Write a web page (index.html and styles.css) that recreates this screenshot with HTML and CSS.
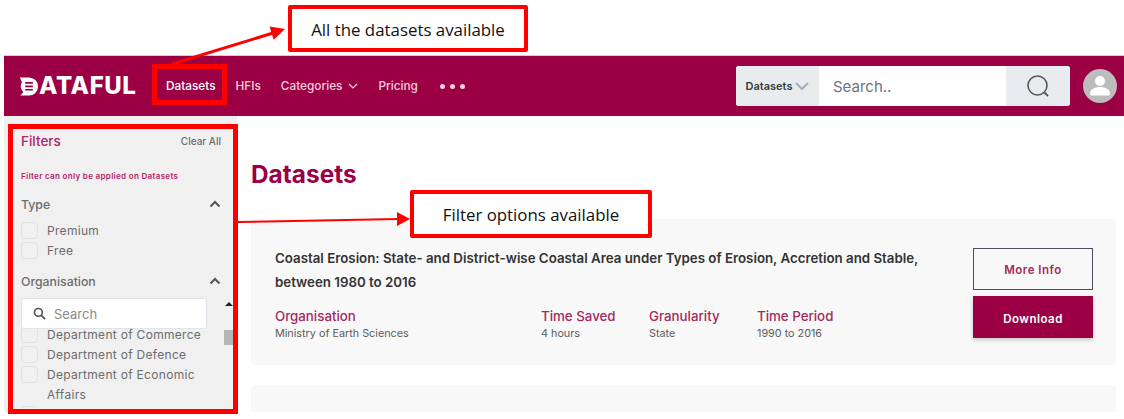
FILE: index.html
```html
<!DOCTYPE html>
<html lang="en">
<head>
<meta charset="utf-8">
<title>Dataful - Datasets</title>
<link rel="stylesheet" href="styles.css">
</head>
<body>
<div class="page">
  <header class="topbar">
    <div class="logo"><span class="logo-d"><svg viewBox="0 0 22 22" width="21" height="21"><path d="M1 1.500h9.500a9.500 9.500 0 0 1 0 19H1.500l3-3.500A9 9 0 0 1 3 6.500z" fill="#fff"/><path d="M6.500 7.200h8M6.500 10.800h8M6.500 14.400h8" stroke="#9b0044" stroke-width="1.800"/></svg></span><span>ATAFUL</span></div>
    <nav class="nav">
      <a class="nav-item active">Datasets</a>
      <a class="nav-item">HFIs</a>
      <a class="nav-item cat">Categories <svg class="chev" viewBox="0 0 10 6" width="10" height="6"><path d="M1 1l4 4 4-4" fill="none" stroke="currentColor" stroke-width="1.200"/></svg></a>
      <a class="nav-item">Pricing</a>
      <span class="dots"><i></i><i></i><i></i></span>
    </nav>
    <div class="search">
      <div class="search-type">Datasets <svg viewBox="0 0 14 8" width="14" height="8"><path d="M1 1l6 6 6-6" fill="none" stroke="#9fb0c0" stroke-width="2"/></svg></div>
      <div class="search-input">Search..</div>
      <div class="search-btn"><svg viewBox="0 0 24 24" width="24" height="24"><circle cx="11.500" cy="11.500" r="9.500" fill="none" stroke="#555" stroke-width="1.600"/><path d="M18.500 18.500l3.500 3.500" stroke="#555" stroke-width="1.800"/></svg></div>
    </div>
    <div class="avatar"><svg viewBox="0 0 34 34" width="34" height="34"><circle cx="17" cy="12" r="5" fill="#fff"/><path d="M7 25c0-5 5-7 10-7s10 2 10 7c0 1-1 1.500-2 1.500H9c-1 0-2-.5-2-1.500z" fill="#fff"/></svg></div>
  </header>
  <div class="body">
    <aside class="filters">
      <div class="filters-head"><span class="filters-title">Filters</span><span class="clear">Clear All</span></div>
      <p class="note">Filter can only be applied on Datasets</p>
      <div class="group-head"><span>Type</span><svg viewBox="0 0 12 8" width="12" height="8"><path d="M1.500 6.500L6 2l4.500 4.500" fill="none" stroke="#555" stroke-width="2"/></svg></div>
      <label class="check"><i></i><span>Premium</span></label>
      <label class="check"><i></i><span>Free</span></label>
      <div class="group-head org"><span>Organisation</span><svg viewBox="0 0 12 8" width="12" height="8"><path d="M1.500 6.500L6 2l4.500 4.500" fill="none" stroke="#555" stroke-width="2"/></svg></div>
      <div class="org-list">
        <div class="org-search"><svg viewBox="0 0 14 14" width="13" height="13"><circle cx="5.800" cy="5.800" r="4.200" fill="none" stroke="#555" stroke-width="1.800"/><path d="M9 9l4 4" stroke="#555" stroke-width="2"/></svg><span>Search</span></div>
        <label class="check"><i></i><span>Department of Commerce</span></label>
        <label class="check"><i></i><span>Department of Defence</span></label>
        <label class="check"><i></i><span>Department of Economic Affairs</span></label>
        <label class="check"><i></i><span></span></label>
        <div class="scroll"><b></b><u></u></div>
      </div>
    </aside>
    <main class="main">
      <h1>Datasets</h1>
      <article class="card">
        <div class="card-info">
          <h2>Coastal Erosion: State- and District-wise Coastal Area under Types of Erosion, Accretion and Stable, between 1980 to 2016</h2>
          <div class="meta">
            <div class="m1"><h3>Organisation</h3><p>Ministry of Earth Sciences</p></div>
            <div class="m2"><h3>Time Saved</h3><p>4 hours</p></div>
            <div class="m3"><h3>Granularity</h3><p>State</p></div>
            <div class="m4"><h3>Time Period</h3><p>1990 to 2016</p></div>
          </div>
        </div>
        <div class="actions">
          <button class="btn outline">More Info</button>
          <button class="btn solid">Download</button>
        </div>
      </article>
      <article class="card empty"></article>
    </main>
  </div>
</div>
<div class="callout c1">All the datasets available</div>
<div class="callout c2">Filter options available</div>
<div class="red-box r1"></div>
<div class="red-box r2"></div>
<svg class="arrows" viewBox="0 0 1124 419" width="1124" height="419">
  <path d="M172 64L273 33" stroke="#f00" stroke-width="3"/>
  <path d="M285 29L269.500 26.400L273.700 39.800z" fill="#f00"/>
  <path d="M238 222L398 219" stroke="#f00" stroke-width="2"/>
  <path d="M410 219L397 212V226z" fill="#f00"/>
</svg>
</body>
</html>
```
FILE: styles.css
```css
* { box-sizing: border-box; }
html, body { margin: 0; background: #fff; }
body { width: 1124px; height: 419px; overflow: hidden; position: relative; font-family: Inter, "Liberation Sans", sans-serif; }
.page { padding: 56px 0 0 4px; }
.topbar { height: 60px; background: #9b0044; box-shadow: 0 -1px 0 #d5cdd0; display: flex; align-items: center; color: #fff; }
.logo { display: flex; align-items: center; margin-left: 15px; width: 133px; font: 800 24px/1 Inter, sans-serif; letter-spacing: .6px; }
.logo-d { display: flex; margin-right: -1px; }
.nav { display: flex; align-items: center; font-size: 11.800px; font-weight: 500; color: #f3cfdc; margin-left: 14px; }
.nav-item { display: flex; align-items: center; gap: 5px; margin-right: 20px; }
.nav-item.cat { gap: 6px; }
.nav-item.active { color: #fff; }
.dots { display: flex; gap: 5px; margin-left: 2px; }
.dots i { width: 5px; height: 5px; border-radius: 50%; background: #f3cfdc; }
.search { margin-left: auto; width: 334px; height: 40px; display: flex; background: #fff; border-radius: 3px; overflow: hidden; }
.search-type { width: 83px; background: #e9ecef; display: flex; align-items: center; justify-content: center; gap: 3px; font-size: 11px; font-weight: 600; color: #343a40; }
.search-input { flex: 1; display: flex; align-items: center; padding-left: 14px; font-size: 15px; color: #6c757d; }
.search-btn { width: 64px; background: #e9ecef; display: flex; align-items: center; justify-content: center; }
.avatar { width: 34px; height: 34px; border-radius: 50%; background: #bdbdbd; margin: 0 7px 0 13px; }
.avatar svg { display: block; }
.body { display: flex; align-items: flex-start; }
.filters { width: 234px; height: 296px; background: #f0f0f0; padding: 17px 16px 0 17px; overflow: hidden; color: #6c6c6c; }
.filters-head { display: flex; justify-content: space-between; align-items: center; }
.filters-title { font-size: 13.500px; font-weight: 500; color: #b0226a; }
.clear { font-size: 10px; font-weight: 500; }
.note { margin: 21px 0 0; font-size: 8px; font-weight: 600; letter-spacing: .33px; color: #b0226a; line-height: 12px; }
.group-head { display: flex; justify-content: space-between; align-items: center; margin-top: 14px; font-size: 12.300px; font-weight: 500; height: 16px; }
.group-head.org { margin-top: 12px; }
.check { display: flex; gap: 9px; font-size: 12px; line-height: 20px; letter-spacing: .3px; }
.check i { flex: none; width: 17px; height: 17px; margin-top: 1px; border: 1px solid #dfe1e6; border-radius: 4px; }
.group-head + .check { margin-top: 9px; }
.org-list { position: relative; height: 117px; margin: 9px -14px 0 0; padding: 27px 14px 0 0; overflow: hidden; }
.org-search { position: absolute; top: 0; left: 0; width: 186px; height: 31px; z-index: 1; background: #fff; border: 1px solid #dfe3ea; border-radius: 3px; display: flex; align-items: center; gap: 8px; padding-left: 11px; font-size: 13px; color: #8a8a8a; }
.scroll { position: absolute; top: 0; right: 1px; width: 10px; height: 100%; }
.scroll b { position: absolute; top: 4px; left: 1px; border: 4px solid transparent; border-top: 0; border-bottom: 4px solid #222; }
.scroll u { position: absolute; top: 32px; left: 0; width: 9px; height: 15px; background: #b5b5b5; }
.main { flex: 1; padding: 0 8px 0 13px; }
h1 { margin: 43px 0 0 1px; font: 700 24.400px/30px Inter, sans-serif; color: #9b0044; }
.card { margin: 30px 0 0 1px; height: 146px; background: #f8f8f8; border-radius: 4px; display: flex; padding: 29px 23px 0 24px; }
.card.empty { margin-top: 20px; padding: 0; height: 27px; border-radius: 4px 4px 0 0; }
.card-info { width: 698px; }
h2 { margin: -2px 0 0; font-size: 13.300px; font-weight: 600; line-height: 24px; color: #333; width: 660px; }
.meta { display: flex; margin-top: 14px; }
.meta h3 { margin: 0; font-size: 13.300px; font-weight: 500; line-height: 16px; color: #a32a5e; }
.meta p { margin: 3px 0 0; font-size: 10.800px; line-height: 14px; color: #5c5c5c; }
.m1 { width: 266px; } .m2 { width: 108px; } .m3 { width: 108px; }
.actions { width: 120px; display: flex; flex-direction: column; gap: 6px; }
.btn { height: 42px; width: 120px; padding: 1px 0 0; font: 600 11.500px Inter, sans-serif; letter-spacing: .5px; border-radius: 0; }
.outline { background: transparent; border: 1px solid #4a5060; color: #a32a5e; }
.solid { padding-top: 3px; background: #9b0044; border: 0; color: #fff; box-shadow: 0 2px 4px rgba(0,0,0,.2); }
.callout { position: absolute; background: #fff; border: 4px solid #f00; border-radius: 2px; display: flex; align-items: center; justify-content: center; font: 16.850px "Open Sans", sans-serif; color: #111; }
.c1 { left: 288px; top: 5px; width: 240px; height: 47px; padding-top: 2px; }
.c2 { left: 410px; top: 190px; width: 242px; height: 48px; }
.red-box { position: absolute; border: 5px solid #f00; }
.r1 { left: 152px; top: 64px; width: 75px; height: 41px; }
.r2 { left: 8px; top: 124px; width: 230px; height: 290px; }
.arrows { position: absolute; left: 0; top: 0; pointer-events: none; }
```
